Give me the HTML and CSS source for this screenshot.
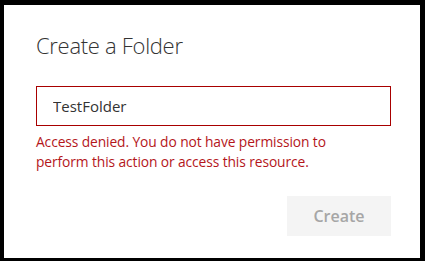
FILE: index.html
```html
<!DOCTYPE html>
<html>
<head>
<meta charset="utf-8">
<link rel="stylesheet" href="styles.css">
</head>
<body>
<div class="frame">
  <div class="dialog">
    <h1 class="title">Create a Folder</h1>
    <div class="field">
      <input class="input" type="text" value="TestFolder">
    </div>
    <p class="error">Access denied. You do not have permission to perform this action or access this resource.</p>
    <div class="actions">
      <button class="btn" disabled>Create</button>
    </div>
  </div>
</div>
</body>
</html>
```
FILE: styles.css
```css
html, body {
  margin: 0;
  padding: 0;
  background: #000;
}
.frame {
  box-sizing: border-box;
  width: 425px;
  height: 261px;
  border-style: solid;
  border-color: #000;
  border-width: 5px 5px 3px 4px;
  background: #fff;
  font-family: "Open Sans", "Noto Sans", sans-serif;
}
.dialog {
  padding: 24px 29px 0 32px;
  display: flex;
  flex-direction: column;
}
.title {
  margin: 0;
  font-size: 22px;
  font-weight: 300;
  line-height: 32px;
  color: #333;
  letter-spacing: -0.3px;
}
.field {
  margin-top: 25px;
}
.input {
  box-sizing: border-box;
  display: block;
  width: 100%;
  height: 40px;
  border: 1px solid #a80000;
  padding: 0 16px;
  font-family: inherit;
  font-size: 15px;
  color: #333;
  background: #fff;
  outline: none;
  border-radius: 0;
}
.error {
  margin: 6px 0 0 0;
  max-width: 316px;
  font-size: 13.8px;
  line-height: 20px;
  color: #b4161b;
  letter-spacing: -0.1px;
}
.actions {
  display: flex;
  justify-content: flex-end;
  margin-top: 24px;
}
.btn {
  width: 104px;
  height: 40px;
  border: none;
  background: #f4f4f4;
  color: #a6a6a6;
  font-family: inherit;
  font-size: 16px;
  font-weight: 600;
  padding: 0;
}
```
